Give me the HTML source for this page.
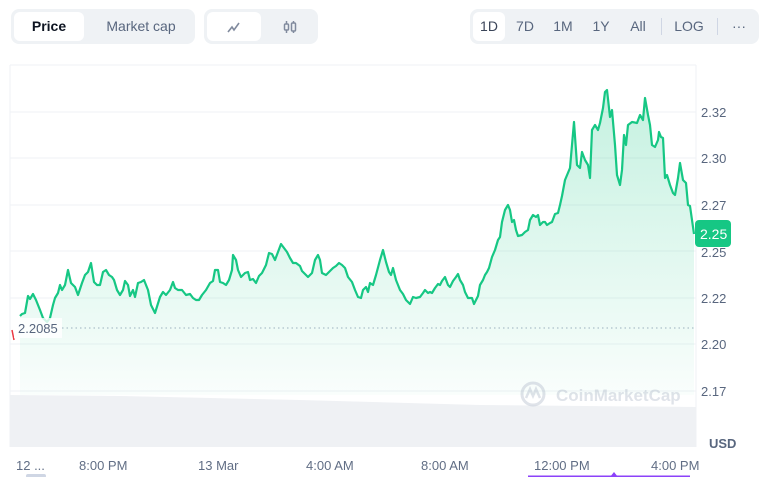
<!DOCTYPE html>
<html><head><meta charset="utf-8"><style>
*{margin:0;padding:0;box-sizing:border-box}
body{width:768px;height:477px;background:#fff;font-family:"Liberation Sans",sans-serif;position:relative;overflow:hidden}
.grp{position:absolute;top:9px;height:35px;background:#eff2f5;border-radius:8px}
.btn{position:absolute;top:3px;height:29px;border-radius:6px;font-size:14px;line-height:29px;text-align:center;color:#58667e}
.on{background:#fff;color:#0d1421;font-weight:bold}
.lbl{position:absolute;font-size:13px;color:#58667e}
.xl{position:absolute;top:458px;font-size:13px;color:#616e85}
</style></head><body>
<div class="grp" style="left:11px;width:184px">
 <div class="btn on" style="left:3px;width:70px">Price</div>
 <div class="btn" style="left:78px;width:104px">Market cap</div>
</div>
<div class="grp" style="left:204px;width:114px">
 <div class="btn on" style="left:3px;width:54px"><svg width="16" height="16" viewBox="0 0 16 16" style="margin-top:7px"><path d="M2 13 L6 8 L8 11 L13 4" fill="none" stroke="#808a9d" stroke-width="1.6"/></svg></div>
 <div class="btn" style="left:60px;width:52px"><svg width="16" height="16" viewBox="0 0 16 16" style="margin-top:7px" fill="none" stroke="#808a9d" stroke-width="1.5"><rect x="2.5" y="5" width="4" height="6" rx="1"/><path d="M4.5 2v3M4.5 11v3M11.5 2v2M11.5 12v2"/><rect x="9.5" y="4" width="4" height="8" rx="1"/></svg></div>
</div>
<div class="grp" style="left:470px;width:289px">
 <div class="btn on" style="left:3px;width:32px;font-weight:normal;color:#3b4559">1D</div>
 <div class="btn" style="left:38px;width:34px">7D</div>
 <div class="btn" style="left:76px;width:34px">1M</div>
 <div class="btn" style="left:114px;width:34px">1Y</div>
 <div class="btn" style="left:151px;width:34px">All</div>
 <div style="position:absolute;left:191px;top:9px;width:1px;height:17px;background:#cfd6e4"></div>
 <div class="btn" style="left:198px;width:42px">LOG</div>
 <div style="position:absolute;left:247px;top:9px;width:1px;height:17px;background:#cfd6e4"></div>
 <div class="btn" style="left:252px;width:34px">···</div>
</div>
<svg width="768" height="477" style="position:absolute;left:0;top:0">
<defs><linearGradient id="g" gradientUnits="userSpaceOnUse" x1="0" y1="90" x2="0" y2="400"><stop offset="0" stop-color="#16c784" stop-opacity="0.25"/><stop offset="1" stop-color="#16c784" stop-opacity="0.02"/></linearGradient></defs>
<line x1="10" y1="65" x2="10" y2="447" stroke="#eff2f5"/>
<line x1="696" y1="65" x2="696" y2="447" stroke="#eff2f5"/>
<g stroke="#eff2f5"><line x1="10" y1="65" x2="696" y2="65"/><line x1="10" y1="112" x2="696" y2="112"/><line x1="10" y1="158" x2="696" y2="158"/><line x1="10" y1="205" x2="696" y2="205"/><line x1="10" y1="251" x2="696" y2="251"/><line x1="10" y1="298" x2="696" y2="298"/><line x1="10" y1="344" x2="696" y2="344"/><line x1="10" y1="391" x2="696" y2="391"/></g>
<path d="M10 395 L120 396 L300 400 L480 405 L696 407 L696 447 L10 447Z" fill="#eff1f4"/>
<line x1="62" y1="328" x2="696" y2="328" stroke="#a6b0c3" stroke-dasharray="1.5 3"/>
<path fill="url(#g)" d="M20 316 L22 314 L25 313 L28 296 L30 299 L33 294 L36 300 L40 310 L43 318 L47 322 L50 318 L53 305 L55 298 L58 293 L60 285 L62 290 L65 285 L68 270 L71 283 L75 287 L78 295 L82 283 L85 275 L88 272 L91 263 L94 282 L97 285 L100 285 L103 272 L106 270 L109 275 L112 277 L114 280 L117 290 L120 295 L123 290 L125 281 L128 285 L130 296 L133 290 L135 297 L138 283 L141 282 L144 280 L148 290 L151 305 L155 313 L160 297 L163 292 L166 295 L170 290 L173 282 L175 288 L178 290 L182 290 L186 295 L190 294 L193 298 L196 300 L199 300 L202 295 L206 290 L210 283 L213 281 L215 270 L218 270 L220 282 L223 283 L226 285 L229 280 L232 270 L233 255 L236 260 L238 270 L241 277 L245 273 L248 272 L250 280 L253 279 L256 283 L259 276 L262 273 L266 265 L269 253 L272 254 L275 260 L278 252 L281 244 L284 248 L287 252 L290 258 L293 263 L296 263 L300 266 L302 271 L305 274 L308 277 L312 273 L315 260 L318 255 L320 260 L322 273 L326 275 L330 271 L333 268 L336 266 L339 263 L342 265 L345 268 L348 277 L352 282 L355 290 L358 297 L361 298 L363 290 L366 287 L368 292 L370 283 L373 285 L376 275 L380 260 L383 250 L386 262 L389 272 L391 275 L393 268 L396 280 L400 290 L403 294 L406 300 L410 304 L413 297 L416 298 L420 297 L423 293 L425 290 L428 293 L430 292 L432 293 L435 288 L438 284 L440 285 L442 281 L445 277 L448 285 L450 287 L453 281 L456 277 L458 274 L460 280 L463 285 L465 292 L468 298 L472 298 L474 304 L476 300 L478 296 L480 285 L483 280 L485 275 L487 272 L489 268 L492 257 L495 250 L498 240 L500 237 L502 222 L505 210 L508 205 L510 210 L512 222 L514 220 L516 230 L518 236 L522 235 L525 232 L528 230 L530 220 L533 215 L536 217 L538 215 L540 225 L543 222 L545 222 L547 225 L550 223 L552 222 L555 214 L558 213 L560 205 L562 196 L565 180 L570 168 L574 122 L577 165 L580 168 L582 152 L585 160 L588 165 L590 178 L592 130 L595 125 L598 130 L600 123 L603 108 L605 92 L607 90 L610 117 L612 110 L615 145 L617 175 L620 185 L622 170 L624 135 L626 145 L628 125 L632 122 L637 123 L640 115 L643 120 L645 98 L648 115 L650 125 L652 145 L655 147 L658 140 L659 132 L661 137 L663 138 L665 178 L667 175 L670 185 L673 193 L675 195 L678 178 L680 163 L683 180 L686 183 L688 205 L690 206 L694 234 L694 395 L20 395Z"/>
<path fill="none" stroke="#16c784" stroke-width="2.2" stroke-linejoin="round" d="M20 316 L22 314 L25 313 L28 296 L30 299 L33 294 L36 300 L40 310 L43 318 L47 322 L50 318 L53 305 L55 298 L58 293 L60 285 L62 290 L65 285 L68 270 L71 283 L75 287 L78 295 L82 283 L85 275 L88 272 L91 263 L94 282 L97 285 L100 285 L103 272 L106 270 L109 275 L112 277 L114 280 L117 290 L120 295 L123 290 L125 281 L128 285 L130 296 L133 290 L135 297 L138 283 L141 282 L144 280 L148 290 L151 305 L155 313 L160 297 L163 292 L166 295 L170 290 L173 282 L175 288 L178 290 L182 290 L186 295 L190 294 L193 298 L196 300 L199 300 L202 295 L206 290 L210 283 L213 281 L215 270 L218 270 L220 282 L223 283 L226 285 L229 280 L232 270 L233 255 L236 260 L238 270 L241 277 L245 273 L248 272 L250 280 L253 279 L256 283 L259 276 L262 273 L266 265 L269 253 L272 254 L275 260 L278 252 L281 244 L284 248 L287 252 L290 258 L293 263 L296 263 L300 266 L302 271 L305 274 L308 277 L312 273 L315 260 L318 255 L320 260 L322 273 L326 275 L330 271 L333 268 L336 266 L339 263 L342 265 L345 268 L348 277 L352 282 L355 290 L358 297 L361 298 L363 290 L366 287 L368 292 L370 283 L373 285 L376 275 L380 260 L383 250 L386 262 L389 272 L391 275 L393 268 L396 280 L400 290 L403 294 L406 300 L410 304 L413 297 L416 298 L420 297 L423 293 L425 290 L428 293 L430 292 L432 293 L435 288 L438 284 L440 285 L442 281 L445 277 L448 285 L450 287 L453 281 L456 277 L458 274 L460 280 L463 285 L465 292 L468 298 L472 298 L474 304 L476 300 L478 296 L480 285 L483 280 L485 275 L487 272 L489 268 L492 257 L495 250 L498 240 L500 237 L502 222 L505 210 L508 205 L510 210 L512 222 L514 220 L516 230 L518 236 L522 235 L525 232 L528 230 L530 220 L533 215 L536 217 L538 215 L540 225 L543 222 L545 222 L547 225 L550 223 L552 222 L555 214 L558 213 L560 205 L562 196 L565 180 L570 168 L574 122 L577 165 L580 168 L582 152 L585 160 L588 165 L590 178 L592 130 L595 125 L598 130 L600 123 L603 108 L605 92 L607 90 L610 117 L612 110 L615 145 L617 175 L620 185 L622 170 L624 135 L626 145 L628 125 L632 122 L637 123 L640 115 L643 120 L645 98 L648 115 L650 125 L652 145 L655 147 L658 140 L659 132 L661 137 L663 138 L665 178 L667 175 L670 185 L673 193 L675 195 L678 178 L680 163 L683 180 L686 183 L688 205 L690 206 L694 234"/>
<path d="M12 330 L14 340" stroke="#ea3943" stroke-width="1.5"/>
<rect x="14" y="318" width="48" height="20" fill="#fff" opacity="0.8"/>
<text x="18" y="333" font-size="13" fill="#58667e" font-family="Liberation Sans">2.2085</text>
<g opacity="0.35"><circle cx="533" cy="394" r="11" fill="none" stroke="#a6b0c3" stroke-width="3"/><path d="M526 398 L530 389 L533 396 L536 389 L540 398" fill="none" stroke="#a6b0c3" stroke-width="2.5"/>
<text x="556" y="401" font-size="17" font-weight="bold" fill="#a6b0c3" font-family="Liberation Sans">CoinMarketCap</text></g>
<rect x="695" y="220" width="36" height="27" rx="4" fill="#16c784"/>
<text x="700" y="239" font-size="14" fill="#fff" font-family="Liberation Sans">2.25</text>
<path d="M528 477 L690 477" stroke="#8c42f9" stroke-width="3"/><path d="M610 477 L614 472 L618 477Z" fill="#8c42f9"/>
<rect x="26" y="474" width="20" height="4" rx="2" fill="#cfd6e4"/>
</svg>
<div class="lbl" style="left:701px;top:105px">2.32</div>
<div class="lbl" style="left:701px;top:151px">2.30</div>
<div class="lbl" style="left:701px;top:198px">2.27</div>
<div class="lbl" style="left:701px;top:245px">2.25</div>
<div class="lbl" style="left:701px;top:291px">2.22</div>
<div class="lbl" style="left:701px;top:337px">2.20</div>
<div class="lbl" style="left:701px;top:384px">2.17</div>
<div class="lbl" style="left:709px;top:436px;font-weight:bold">USD</div>
<div class="xl" style="left:16px">12 ...</div>
<div class="xl" style="left:79px">8:00 PM</div>
<div class="xl" style="left:198px">13 Mar</div>
<div class="xl" style="left:306px">4:00 AM</div>
<div class="xl" style="left:421px">8:00 AM</div>
<div class="xl" style="left:534px">12:00 PM</div>
<div class="xl" style="left:651px">4:00 PM</div>
</body></html>
